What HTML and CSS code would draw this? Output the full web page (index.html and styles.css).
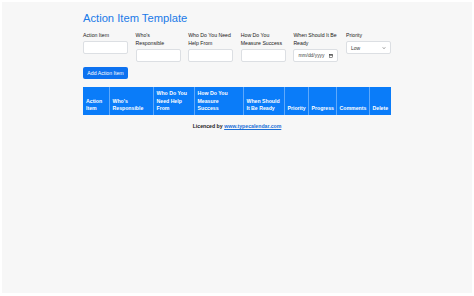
FILE: index.html
```html
<!DOCTYPE html>
<html>
<head>
<meta charset="utf-8">
<link rel="stylesheet" href="styles.css">
</head>
<body>
<div class="page">
  <div class="container">
    <h1 class="title">Action Item Template</h1>
    <div class="form-row">
      <div class="field">
        <label class="label">Action Item</label>
        <input class="input" type="text">
      </div>
      <div class="field">
        <label class="label">Who's<br>Responsible</label>
        <input class="input" type="text">
      </div>
      <div class="field">
        <label class="label">Who Do You Need<br>Help From</label>
        <input class="input" type="text">
      </div>
      <div class="field">
        <label class="label">How Do You<br>Measure Success</label>
        <input class="input" type="text">
      </div>
      <div class="field">
        <label class="label">When Should It Be<br>Ready</label>
        <div class="input date"><span>mm/dd/yyyy</span>
          <svg class="cal" viewBox="0 0 10 10" width="4" height="4"><rect x="1" y="1.5" width="8" height="7.5" fill="none" stroke="#222" stroke-width="1.2"/><rect x="1" y="1.5" width="8" height="2.2" fill="#222"/></svg>
        </div>
      </div>
      <div class="field">
        <label class="label">Priority</label>
        <div class="input select"><span>Low</span>
          <svg class="chev" viewBox="0 0 10 10" width="4" height="4"><path d="M2 3.5 L5 6.5 L8 3.5" fill="none" stroke="#333" stroke-width="1.4"/></svg>
        </div>
      </div>
    </div>
    <button class="btn">Add Action Item</button>
    <table class="table">
      <thead>
        <tr>
          <th class="c1">Action<br>Item</th>
          <th class="c2">Who's<br>Responsible</th>
          <th class="c3">Who Do You<br>Need Help<br>From</th>
          <th class="c4">How Do You<br>Measure<br>Success</th>
          <th class="c5">When Should<br>It Be Ready</th>
          <th class="c6">Priority</th>
          <th class="c7">Progress</th>
          <th class="c8">Comments</th>
          <th class="c9">Delete</th>
        </tr>
      </thead>
    </table>
    <p class="footer">Licenced by <a href="#">www.typecalendar.com</a></p>
  </div>
</div>
</body>
</html>
```
FILE: styles.css
```css
html, body {
  margin: 0;
  padding: 0;
  background: #ffffff;
}
body {
  font-family: "Liberation Sans", Arial, sans-serif;
}
.page {
  margin: 2px 2px 0 2px;
  height: 291px;
  background: #f7f7f7;
}
.container {
  width: 308px;
  margin: 0 auto;
  padding-top: 9px;
}
.title {
  margin: 0;
  font-size: 11.2px;
  font-weight: 400;
  line-height: 14px;
  color: #1a7ae8;
}
.form-row {
  display: grid;
  grid-template-columns: repeat(6, 52.6px);
  margin-top: 6px;
  align-items: start;
}
.field {
  display: flex;
  flex-direction: column;
}
.label {
  font-size: 5.2px;
  line-height: 8px;
  color: #222;
  margin-bottom: 2px;
}
.input {
  box-sizing: border-box;
  width: 45px;
  height: 13px;
  border: 0.5px solid #dcdfe3;
  border-radius: 2px;
  background: #fff;
  padding: 0 4px;
  font-size: 5px;
  color: #333;
  display: flex;
  align-items: center;
  justify-content: space-between;
}
.date span {
  font-size: 4.9px;
  color: #444;
}
.cal, .chev {
  flex: none;
}
.btn {
  display: block;
  margin-top: 5px;
  width: 45px;
  height: 12px;
  padding: 0;
  border: none;
  border-radius: 2px;
  background: #0d72f0;
  color: #fff;
  font-family: "Liberation Sans", Arial, sans-serif;
  font-size: 5.2px;
}
.table {
  margin-top: 8px;
  width: 308px;
  border-collapse: collapse;
  table-layout: fixed;
}
.table th {
  box-sizing: border-box;
  background: #0a7cf9;
  color: #fff;
  font-size: 5.2px;
  line-height: 7.6px;
  font-weight: 700;
  text-align: left;
  vertical-align: bottom;
  padding: 3px 3px 2px 3px;
  border-left: 0.5px solid rgba(255,255,255,0.35);
}
.table th:first-child { border-left: none; }
.c1 { width: 26px; }
.c2 { width: 44px; }
.c3 { width: 41px; }
.c4 { width: 49px; }
.c5 { width: 41px; }
.c6 { width: 24px; }
.c7 { width: 28px; }
.c8 { width: 33px; }
.c9 { width: 22px; }
.footer {
  margin: 8px 0 0 0;
  text-align: center;
  font-size: 5.2px;
  font-weight: 700;
  color: #222;
}
.footer a {
  color: #1a6fd8;
}
```
